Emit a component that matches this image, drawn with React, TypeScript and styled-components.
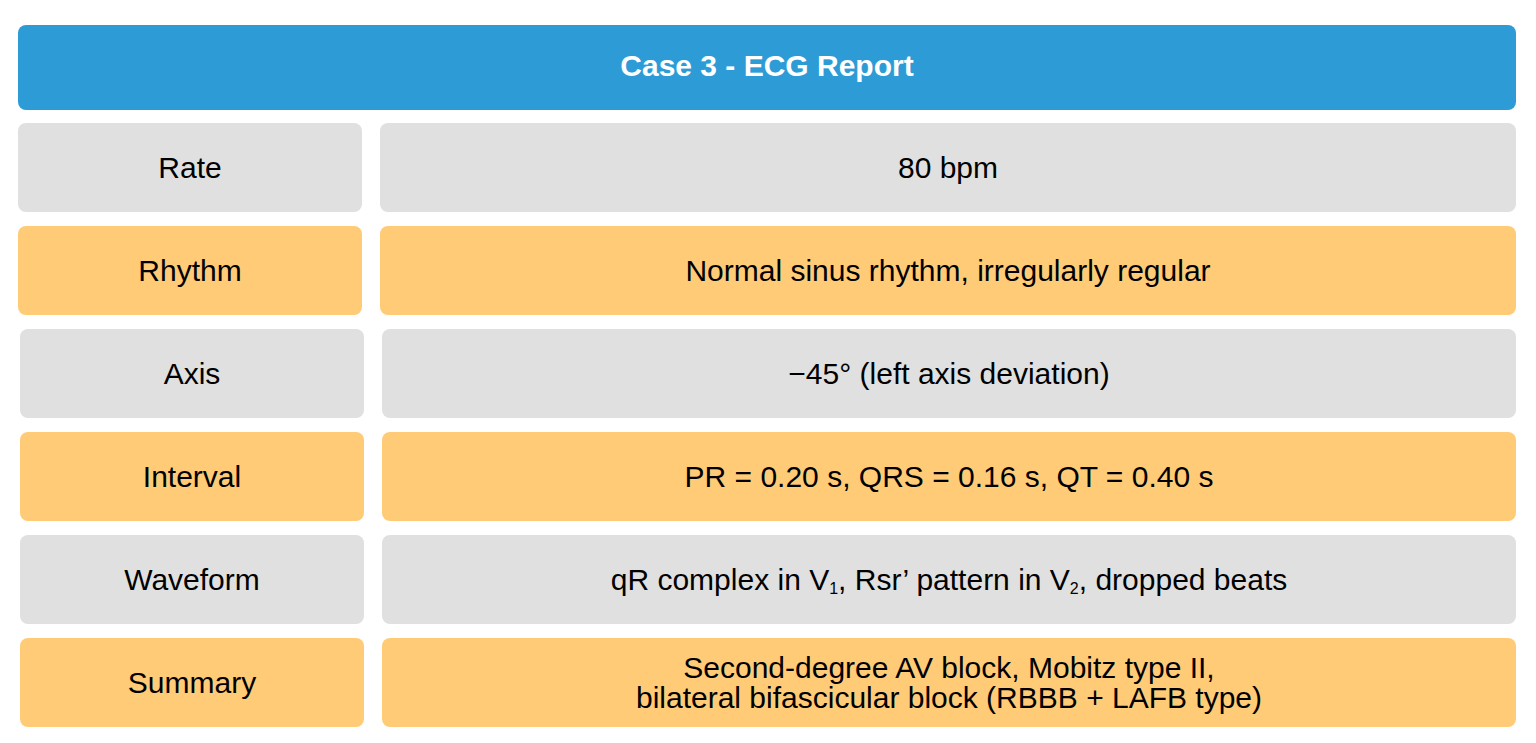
import React from "react";
import styled, { createGlobalStyle } from "styled-components";

const Global = createGlobalStyle`
  html, body { margin: 0; padding: 0; background: #ffffff; }
  body { font-family: "Liberation Sans", Arial, sans-serif; }
`;

const Page = styled.div`
  width: 1536px;
  box-sizing: border-box;
  padding: 25px 20px 0 18px;
  display: flex;
  flex-direction: column;
`;

const Header = styled.div`
  height: 85px;
  box-sizing: border-box;
  padding-bottom: 4px;
  background: #2d9cd6;
  border-radius: 8px;
  display: flex;
  align-items: center;
  justify-content: center;
  color: #ffffff;
  font-weight: 700;
  font-size: 30px;
  margin-bottom: 13px;
`;

const Rows = styled.div`
  display: flex;
  flex-direction: column;
  gap: 14px;
`;

const Row = styled.div<{ $shift: boolean }>`
  display: flex;
  gap: 18px;
  height: 89px;
  margin-left: ${(p) => (p.$shift ? "2px" : "0")};
`;

const Cell = styled.div<{ $tone: "gray" | "orange"; $wide?: boolean }>`
  background: ${(p) => (p.$tone === "gray" ? "#e0e0e0" : "#ffcb77")};
  border-radius: 8px;
  display: flex;
  align-items: center;
  justify-content: center;
  text-align: center;
  color: #000000;
  font-size: 30px;
  line-height: 30px;
  ${(p) => (p.$wide ? "flex: 1;" : "width: 344px; flex: none;")}
`;

const Sub = styled.sub`
  font-size: 16px;
  vertical-align: -4px;
  line-height: 0;
`;

type RowData = { label: string; value: React.ReactNode };

const rows: RowData[] = [
  { label: "Rate", value: "80 bpm" },
  { label: "Rhythm", value: "Normal sinus rhythm, irregularly regular" },
  { label: "Axis", value: "−45° (left axis deviation)" },
  { label: "Interval", value: "PR = 0.20 s, QRS = 0.16 s, QT = 0.40 s" },
  {
    label: "Waveform",
    value: (
      <>
        qR complex in V<Sub>1</Sub>, Rsr’ pattern in V<Sub>2</Sub>, dropped beats
      </>
    ),
  },
  {
    label: "Summary",
    value: (
      <>
        Second-degree AV block, Mobitz type II,
        <br />
        bilateral bifascicular block (RBBB + LAFB type)
      </>
    ),
  },
];

export default function App() {
  return (
    <>
      <Global />
      <Page>
        <Header>Case 3 - ECG Report</Header>
        <Rows>
          {rows.map((r, i) => {
            const tone = i % 2 === 0 ? "gray" : "orange";
            return (
              <Row key={r.label} $shift={i >= 2}>
                <Cell $tone={tone}>{r.label}</Cell>
                <Cell $tone={tone} $wide>
                  <span>{r.value}</span>
                </Cell>
              </Row>
            );
          })}
        </Rows>
      </Page>
    </>
  );
}
